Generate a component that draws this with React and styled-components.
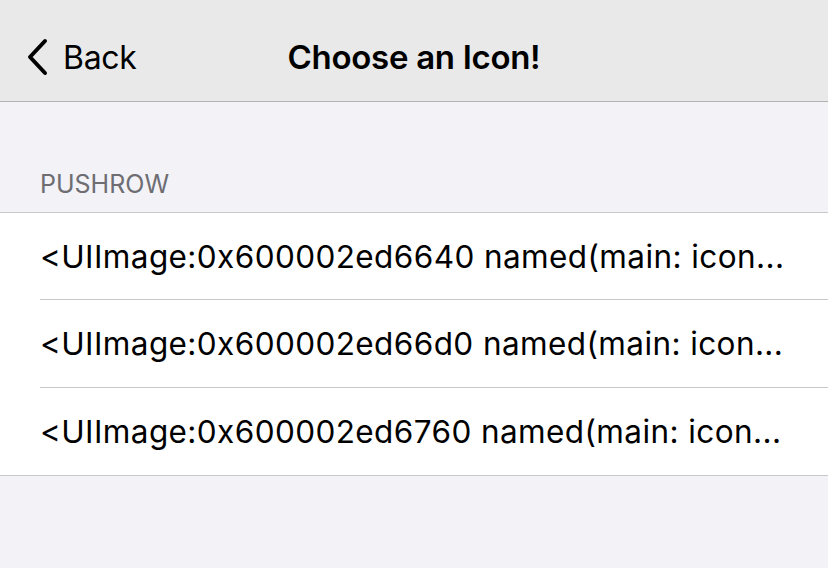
import React from "react"
import styled, {createGlobalStyle} from "styled-components"

const rows = [
    "<UIImage:0x600002ed6640 named(main: icon...",
    "<UIImage:0x600002ed66d0 named(main: icon...",
    "<UIImage:0x600002ed6760 named(main: icon...",
]

function App() {
    return (
        <>
            <Global />
            <Page>
                <NavBar>
                    <BackButton>
                        <svg width="24" height="38" viewBox="0 0 24 38">
                            <path d="M20 3 L5 19 L20 35" fill="none" stroke="#000" strokeWidth="4" strokeLinecap="round" strokeLinejoin="round" />
                        </svg>
                        <span>Back</span>
                    </BackButton>
                    <Title>Choose an Icon!</Title>
                </NavBar>

                <SectionHeader>PUSHROW</SectionHeader>
                <Table>
                    {rows.map((r, i) => (
                        <Row key={i} $last={i === rows.length - 1}>
                            <RowText>{r}</RowText>
                        </Row>
                    ))}
                </Table>
            </Page>
        </>
    )
}

const Global = createGlobalStyle`
    body {
        margin: 0;
        font-family: Inter, "Noto Sans", sans-serif;
        background: #f2f2f7;
    }
`

const Page = styled.div`
    width: 828px;
    height: 568px;
    background: #f2f2f7;
    overflow: hidden;
`

const NavBar = styled.div`
    position: relative;
    height: 102px;
    padding-top: 13px;
    background: #e9e9e9;
    border-bottom: 1px solid #b2b2b2;
    display: flex;
    align-items: center;
    justify-content: center;
    box-sizing: border-box;
`

const BackButton = styled.div`
    position: absolute;
    left: 25px;
    top: 13px;
    bottom: 0;
    display: flex;
    align-items: center;
    gap: 14px;
    font-size: 32px;
    color: #000;

    span {
        letter-spacing: -0.3px;
    }
`

const Title = styled.div`
    font-size: 33px;
    font-weight: 600;
    letter-spacing: -0.3px;
`

const SectionHeader = styled.div`
    height: 111px;
    padding: 0 40px 13px;
    box-sizing: border-box;
    font-size: 25px;
    color: #6d6d72;
    display: flex;
    align-items: flex-end;
    border-bottom: 1px solid #c8c7cc;
`

const Table = styled.div`
    background: #fff;
    border-bottom: 1px solid #c8c7cc;
`

const Row = styled.div`
    margin-left: 40px;
    height: 87.3px;
    box-sizing: border-box;
    border-bottom: ${p => (p.$last ? "none" : "1px solid #c8c7cc")};
    display: flex;
    align-items: center;
`

const RowText = styled.div`
    font-size: 31.5px;
    color: #000;
    white-space: nowrap;
    letter-spacing: 0.4px;
`

export default App
